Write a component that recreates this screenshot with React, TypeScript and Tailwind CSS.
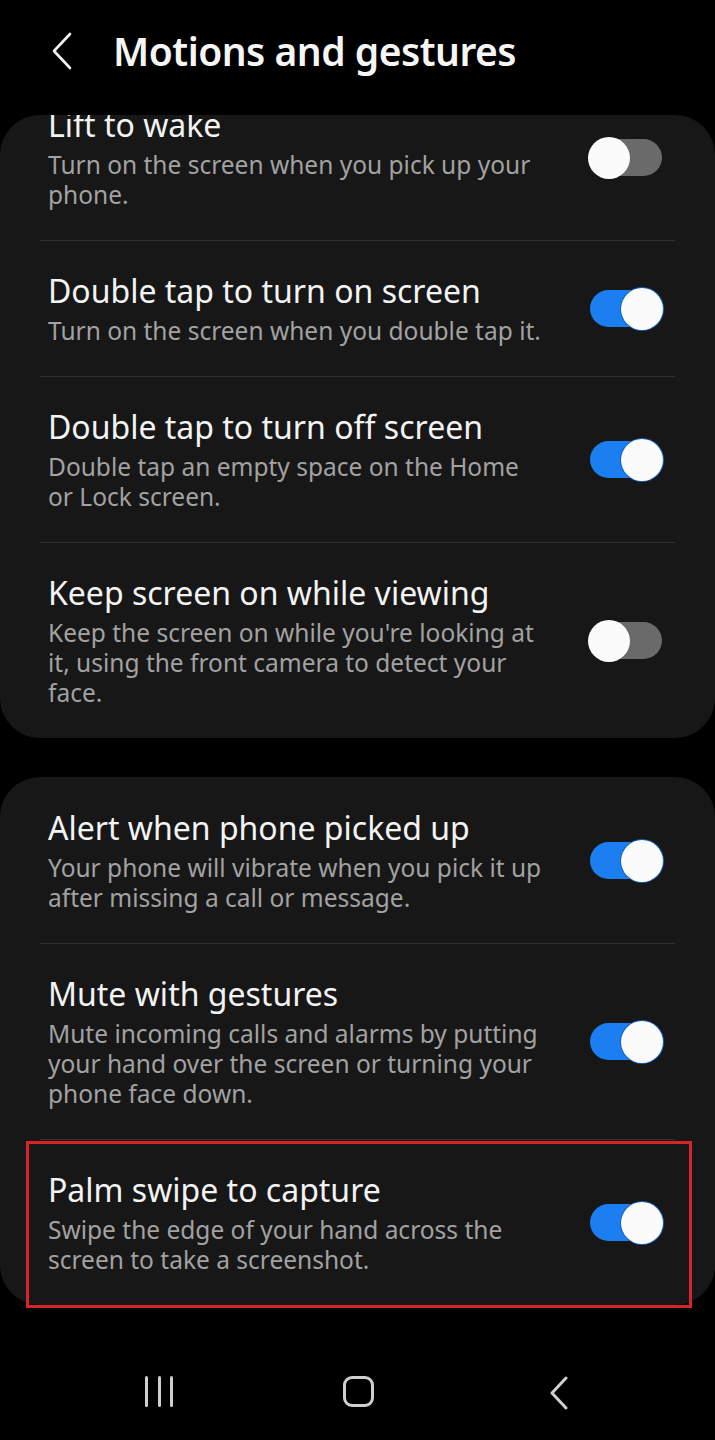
import type { ReactNode } from "react";

interface SettingRow {
  title: string;
  lines: string[];
  on: boolean;
}

const firstGroup: SettingRow[] = [
  { title: "Lift to wake", lines: ["Turn on the screen when you pick up your", "phone."], on: false },
  { title: "Double tap to turn on screen", lines: ["Turn on the screen when you double tap it."], on: true },
  { title: "Double tap to turn off screen", lines: ["Double tap an empty space on the Home", "or Lock screen."], on: true },
  {
    title: "Keep screen on while viewing",
    lines: ["Keep the screen on while you're looking at", "it, using the front camera to detect your", "face."],
    on: false,
  },
];

const secondGroup: SettingRow[] = [
  { title: "Alert when phone picked up", lines: ["Your phone will vibrate when you pick it up", "after missing a call or message."], on: true },
  {
    title: "Mute with gestures",
    lines: ["Mute incoming calls and alarms by putting", "your hand over the screen or turning your", "phone face down."],
    on: true,
  },
  { title: "Palm swipe to capture", lines: ["Swipe the edge of your hand across the", "screen to take a screenshot."], on: true },
];

const Toggle = ({ on }: { on: boolean }) => (
  <div className={`relative h-[37px] w-[72px] shrink-0 rounded-full ${on ? "bg-[#1b7ff2]" : "bg-[#6a6a6a]"}`}>
    <div
      className={`absolute top-[-2.5px] size-[42px] rounded-full bg-[#fbfbfb] ${
        on ? "right-[-1px] ring-1 ring-[#1462c4]" : "left-[-2px]"
      }`}
    />
  </div>
);

const Row = ({ row, className = "", children }: { row: SettingRow; className?: string; children?: ReactNode }) => (
  <div className={`relative flex items-center pb-[30px] pl-[48px] pr-[53px] ${className}`}>
    <div className="flex-1">
      <p className="text-[32px] leading-[40px] text-[#f3f3f3]">{row.title}</p>
      <p className="mt-[5px] text-[24.5px] leading-[30px] text-[#a2a2a2]">
        {row.lines.map((line) => (
          <span key={line} className="block whitespace-nowrap">
            {line}
          </span>
        ))}
      </p>
    </div>
    <Toggle on={row.on} />
    {children}
  </div>
);

const Divider = () => <div className="mx-[40px] h-px bg-[#303030]" />;

const App = () => {
  return (
    <div className="h-[1440px] w-[715px] overflow-hidden bg-black font-['Noto_Sans',sans-serif]">
      <header className="flex h-[102px] items-center">
        <svg width="30" height="40" viewBox="0 0 30 40" className="ml-[47px]">
          <path d="M23 3 L7 20 L23 37" fill="none" stroke="#f2f2f2" strokeWidth="2.6" strokeLinecap="round" strokeLinejoin="round" />
        </svg>
        <h1 className="ml-[36px] text-[39px] font-semibold leading-[48px] tracking-[-0.5px] text-[#f6f6f6]">
          Motions and gestures
        </h1>
      </header>

      <section className="mt-[13px] overflow-hidden rounded-[40px] bg-[#171717]">
        {firstGroup.map((row, index) => (
          <div key={row.title}>
            {index > 0 && <Divider />}
            <Row row={row} className={index === 0 ? "-mt-[40px] pt-[30px]" : "pt-[30px]"} />
          </div>
        ))}
      </section>

      <section className="mt-[39px] rounded-[40px] bg-[#171717]">
        {secondGroup.map((row, index) => (
          <div key={row.title}>
            {index > 0 && <Divider />}
            <Row row={row} className={index === 0 ? "pt-[31px]" : "pt-[30px]"}>
              {index === secondGroup.length - 1 && (
                <div className="pointer-events-none absolute -bottom-[3px] left-[26px] right-[23px] top-[1px] border-[3px] border-[#d8232b]" />
              )}
            </Row>
          </div>
        ))}
      </section>

      <nav className="grid grid-cols-3 px-[60px] pt-[71px]">
        <div className="flex justify-center gap-[9.5px]">
          <span className="h-[31px] w-[3px] rounded-full bg-[#cfcfcf]" />
          <span className="h-[31px] w-[3px] rounded-full bg-[#cfcfcf]" />
          <span className="h-[31px] w-[3px] rounded-full bg-[#cfcfcf]" />
        </div>
        <div className="flex justify-center">
          <span className="ml-[2px] size-[31px] rounded-[9px] border-[3px] border-[#cfcfcf]" />
        </div>
        <div className="flex justify-center">
          <svg width="20" height="34" viewBox="0 0 20 34" className="ml-[6px]">
            <path d="M17 2 L3 17 L17 32" fill="none" stroke="#cfcfcf" strokeWidth="3" strokeLinecap="round" strokeLinejoin="round" />
          </svg>
        </div>
      </nav>
    </div>
  );
};

export default App;
